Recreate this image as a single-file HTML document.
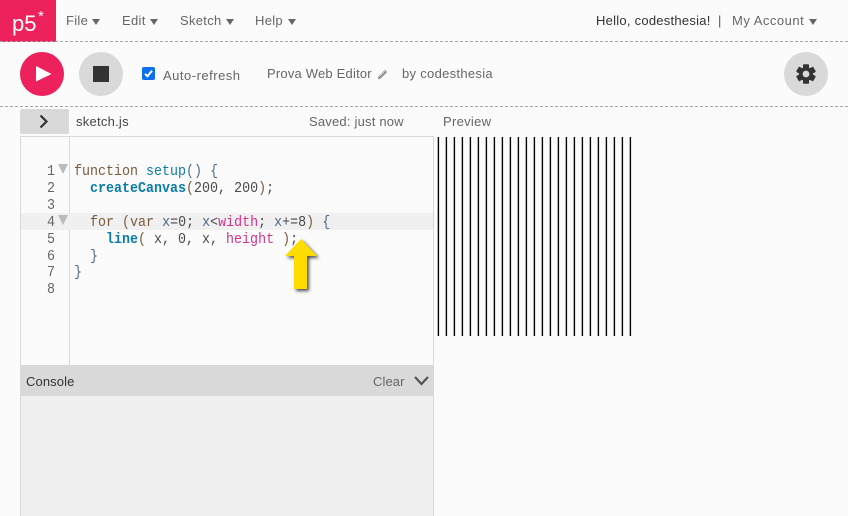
<!DOCTYPE html>
<html><head><meta charset="utf-8">
<style>
html,body{margin:0;padding:0;width:848px;height:516px;overflow:hidden;background:#fbfbfb}
body{position:relative;font-family:"Liberation Sans",sans-serif;color:#666;font-size:13px}
.a{position:absolute;white-space:nowrap;line-height:16px}
.dash{position:absolute;left:0;width:848px;height:0;border-top:1px dashed #a6a6a6}
.tri{position:absolute;width:0;height:0;border-left:4.5px solid transparent;border-right:4.5px solid transparent;border-top:6px solid #666}
.code{position:absolute;left:74px;font-family:"Liberation Mono",monospace;font-size:15px;line-height:17px;height:17px;white-space:pre;color:#4a4a4a;transform:scaleX(.8889);transform-origin:0 0}
.n{position:absolute;left:19px;width:36px;text-align:right;font-family:"Liberation Mono",monospace;font-size:15px;line-height:17px;color:#666;transform:scaleX(.8889);transform-origin:100% 0}
.f{color:#0b7ca9}.b{color:#0b7ca9;font-weight:bold}.k{color:#7a5a3a}.p{color:#d6308f}.v{color:#4b6b8a}
.fold{position:absolute;left:58px;width:0;height:0;border-left:5px solid transparent;border-right:5px solid transparent;border-top:10px solid #bbb}
</style></head><body>
<div style="position:absolute;left:0;top:0;width:56px;height:42px;background:#ed225d"></div>
<div class="a" style="left:12px;top:10px;color:#fff;font-size:22px;line-height:28px">p5</div>
<div class="a" style="left:38px;top:10px;color:#fff;font-size:15px;line-height:14px">*</div>
<div class="a" style="left:66px;top:13px;letter-spacing:.3px">File</div><div class="tri" style="left:92px;top:19px"></div>
<div class="a" style="left:122px;top:13px;letter-spacing:.3px">Edit</div><div class="tri" style="left:150px;top:19px"></div>
<div class="a" style="left:180px;top:13px;letter-spacing:.3px">Sketch</div><div class="tri" style="left:226px;top:19px"></div>
<div class="a" style="left:255px;top:13px;letter-spacing:.3px">Help</div><div class="tri" style="left:288px;top:19px"></div>
<div class="a" style="left:596px;top:13px;color:#333;letter-spacing:.25px">Hello, codesthesia!</div>
<div class="a" style="left:718px;top:13px;color:#555">|</div>
<div class="a" style="left:732px;top:13px;letter-spacing:.5px">My Account</div><div class="tri" style="left:809px;top:19px"></div>
<div class="dash" style="top:41px"></div>
<div class="dash" style="top:106px"></div>

<div style="position:absolute;left:20px;top:52px;width:44px;height:44px;border-radius:50%;background:#ed225d"></div>
<svg style="position:absolute;left:36px;top:66px" width="16" height="16"><path d="M0 0L15.5 8L0 15.5Z" fill="#fff"/></svg>
<div style="position:absolute;left:79px;top:52px;width:44px;height:44px;border-radius:50%;background:#d9d9d9"></div>
<div style="position:absolute;left:93px;top:66px;width:16px;height:16px;background:#333"></div>
<svg style="position:absolute;left:142px;top:67px" width="13" height="13"><rect width="13" height="13" rx="2" fill="#0b6ff0"/><path d="M3 6.8L5.5 9.3L10 3.6" fill="none" stroke="#fff" stroke-width="2"/></svg>
<div class="a" style="left:163px;top:68px;letter-spacing:.5px">Auto-refresh</div>
<div class="a" style="left:267px;top:66px;letter-spacing:.2px">Prova Web Editor</div>
<svg style="position:absolute;left:377px;top:69px" width="11" height="11"><path d="M.8 10.2L1.5 7.4L8 .9L10.1 3L3.6 9.5Z" fill="#8a8a8a"/><path d="M2.5 7.6L8 2.1" stroke="#fbfbfb" stroke-width=".6"/></svg>
<div class="a" style="left:402px;top:66px;letter-spacing:.3px">by codesthesia</div>
<div style="position:absolute;left:784px;top:52px;width:44px;height:44px;border-radius:50%;background:#d9d9d9"></div>
<svg style="position:absolute;left:795px;top:63px" width="22" height="22" viewBox="-11 -11 22 22"><g fill="#333"><rect x="-3" y="-9.8" width="6" height="19.6" rx=".8"/><rect x="-3" y="-9.8" width="6" height="19.6" rx=".8" transform="rotate(60)"/><rect x="-3" y="-9.8" width="6" height="19.6" rx=".8" transform="rotate(120)"/></g><circle r="7" fill="#333"/><circle r="3.4" fill="#d9d9d9"/></svg>

<div style="position:absolute;left:20px;top:109px;width:49px;height:25px;border-radius:2px;background:#d9d9d9"></div>
<svg style="position:absolute;left:38px;top:114px" width="12" height="15"><path d="M2.5 1.5L8.5 7.5L2.5 13.5" fill="none" stroke="#333" stroke-width="2.2"/></svg>
<div class="a" style="left:76px;top:114px;color:#444;letter-spacing:.25px">sketch.js</div>
<div class="a" style="left:309px;top:114px;letter-spacing:.2px">Saved: just now</div>
<div class="a" style="left:443px;top:114px;letter-spacing:.3px">Preview</div>

<div style="position:absolute;left:20px;top:136px;width:412px;height:380px;border:1px solid #d9d9d9;border-bottom:0"></div>
<div style="position:absolute;left:69px;top:137px;width:1px;height:228px;background:#d9d9d9"></div>
<div style="position:absolute;left:21px;top:213px;width:412px;height:17px;background:#f0f0f0"></div>

<div class="n" style="top:163px">1</div><div class="n" style="top:180px">2</div><div class="n" style="top:197px">3</div><div class="n" style="top:214px">4</div><div class="n" style="top:231px">5</div><div class="n" style="top:248px">6</div><div class="n" style="top:264px">7</div><div class="n" style="top:281px">8</div>
<div class="fold" style="top:164px"></div><div class="fold" style="top:215px"></div>

<div class="code" style="top:163px"><span class="k">function</span> <span class="f">setup</span><span class="v">()</span> <span class="v">{</span></div>
<div class="code" style="top:180px">  <span class="b">createCanvas</span><span class="k">(</span>200, 200<span class="k">)</span>;</div>
<div class="code" style="top:214px">  <span class="k">for</span> <span class="k">(var</span> <span class="v">x</span>=0; <span class="v">x</span>&lt;<span class="p">width</span>; <span class="v">x</span>+=8<span class="k">)</span> <span class="v">{</span></div>
<div class="code" style="top:231px">    <span class="b">line</span><span class="k">(</span> x, 0, x, <span class="p">height</span> <span class="k">)</span>;</div>
<div class="code" style="top:248px">  <span class="v">}</span></div>
<div class="code" style="top:264px"><span class="v">}</span></div>

<svg style="position:absolute;left:280px;top:235px;overflow:visible" width="44" height="60"><path d="M21 4L37 21H27V54H14V21H5Z" fill="#ffdc00" style="filter:drop-shadow(2px 2px 1.5px rgba(0,0,0,.7))"/></svg>

<svg style="position:absolute;left:436px;top:137px" width="200" height="200"><path d="M2 0V199M10 0V199M18 0V199M26 0V199M34 0V199M42 0V199M50 0V199M58 0V199M66 0V199M74 0V199M82 0V199M90 0V199M98 0V199M106 0V199M114 0V199M122 0V199M130 0V199M138 0V199M146 0V199M154 0V199M162 0V199M170 0V199M178 0V199M186 0V199M194 0V199" stroke="#000" stroke-width="1.4" fill="none" transform="translate(.4,0)"/></svg>

<div style="position:absolute;left:21px;top:365px;width:412px;height:31px;background:#d9d9d9"></div>
<div style="position:absolute;left:21px;top:396px;width:412px;height:120px;background:#f0f0f0"></div>
<div class="a" style="left:26px;top:374px;color:#333;letter-spacing:.1px">Console</div>
<div class="a" style="left:373px;top:374px;letter-spacing:.1px">Clear</div>
<svg style="position:absolute;left:414px;top:375px" width="15" height="12"><path d="M1 2L7.5 9L14 2" fill="none" stroke="#555" stroke-width="2.2"/></svg>
</body></html>
